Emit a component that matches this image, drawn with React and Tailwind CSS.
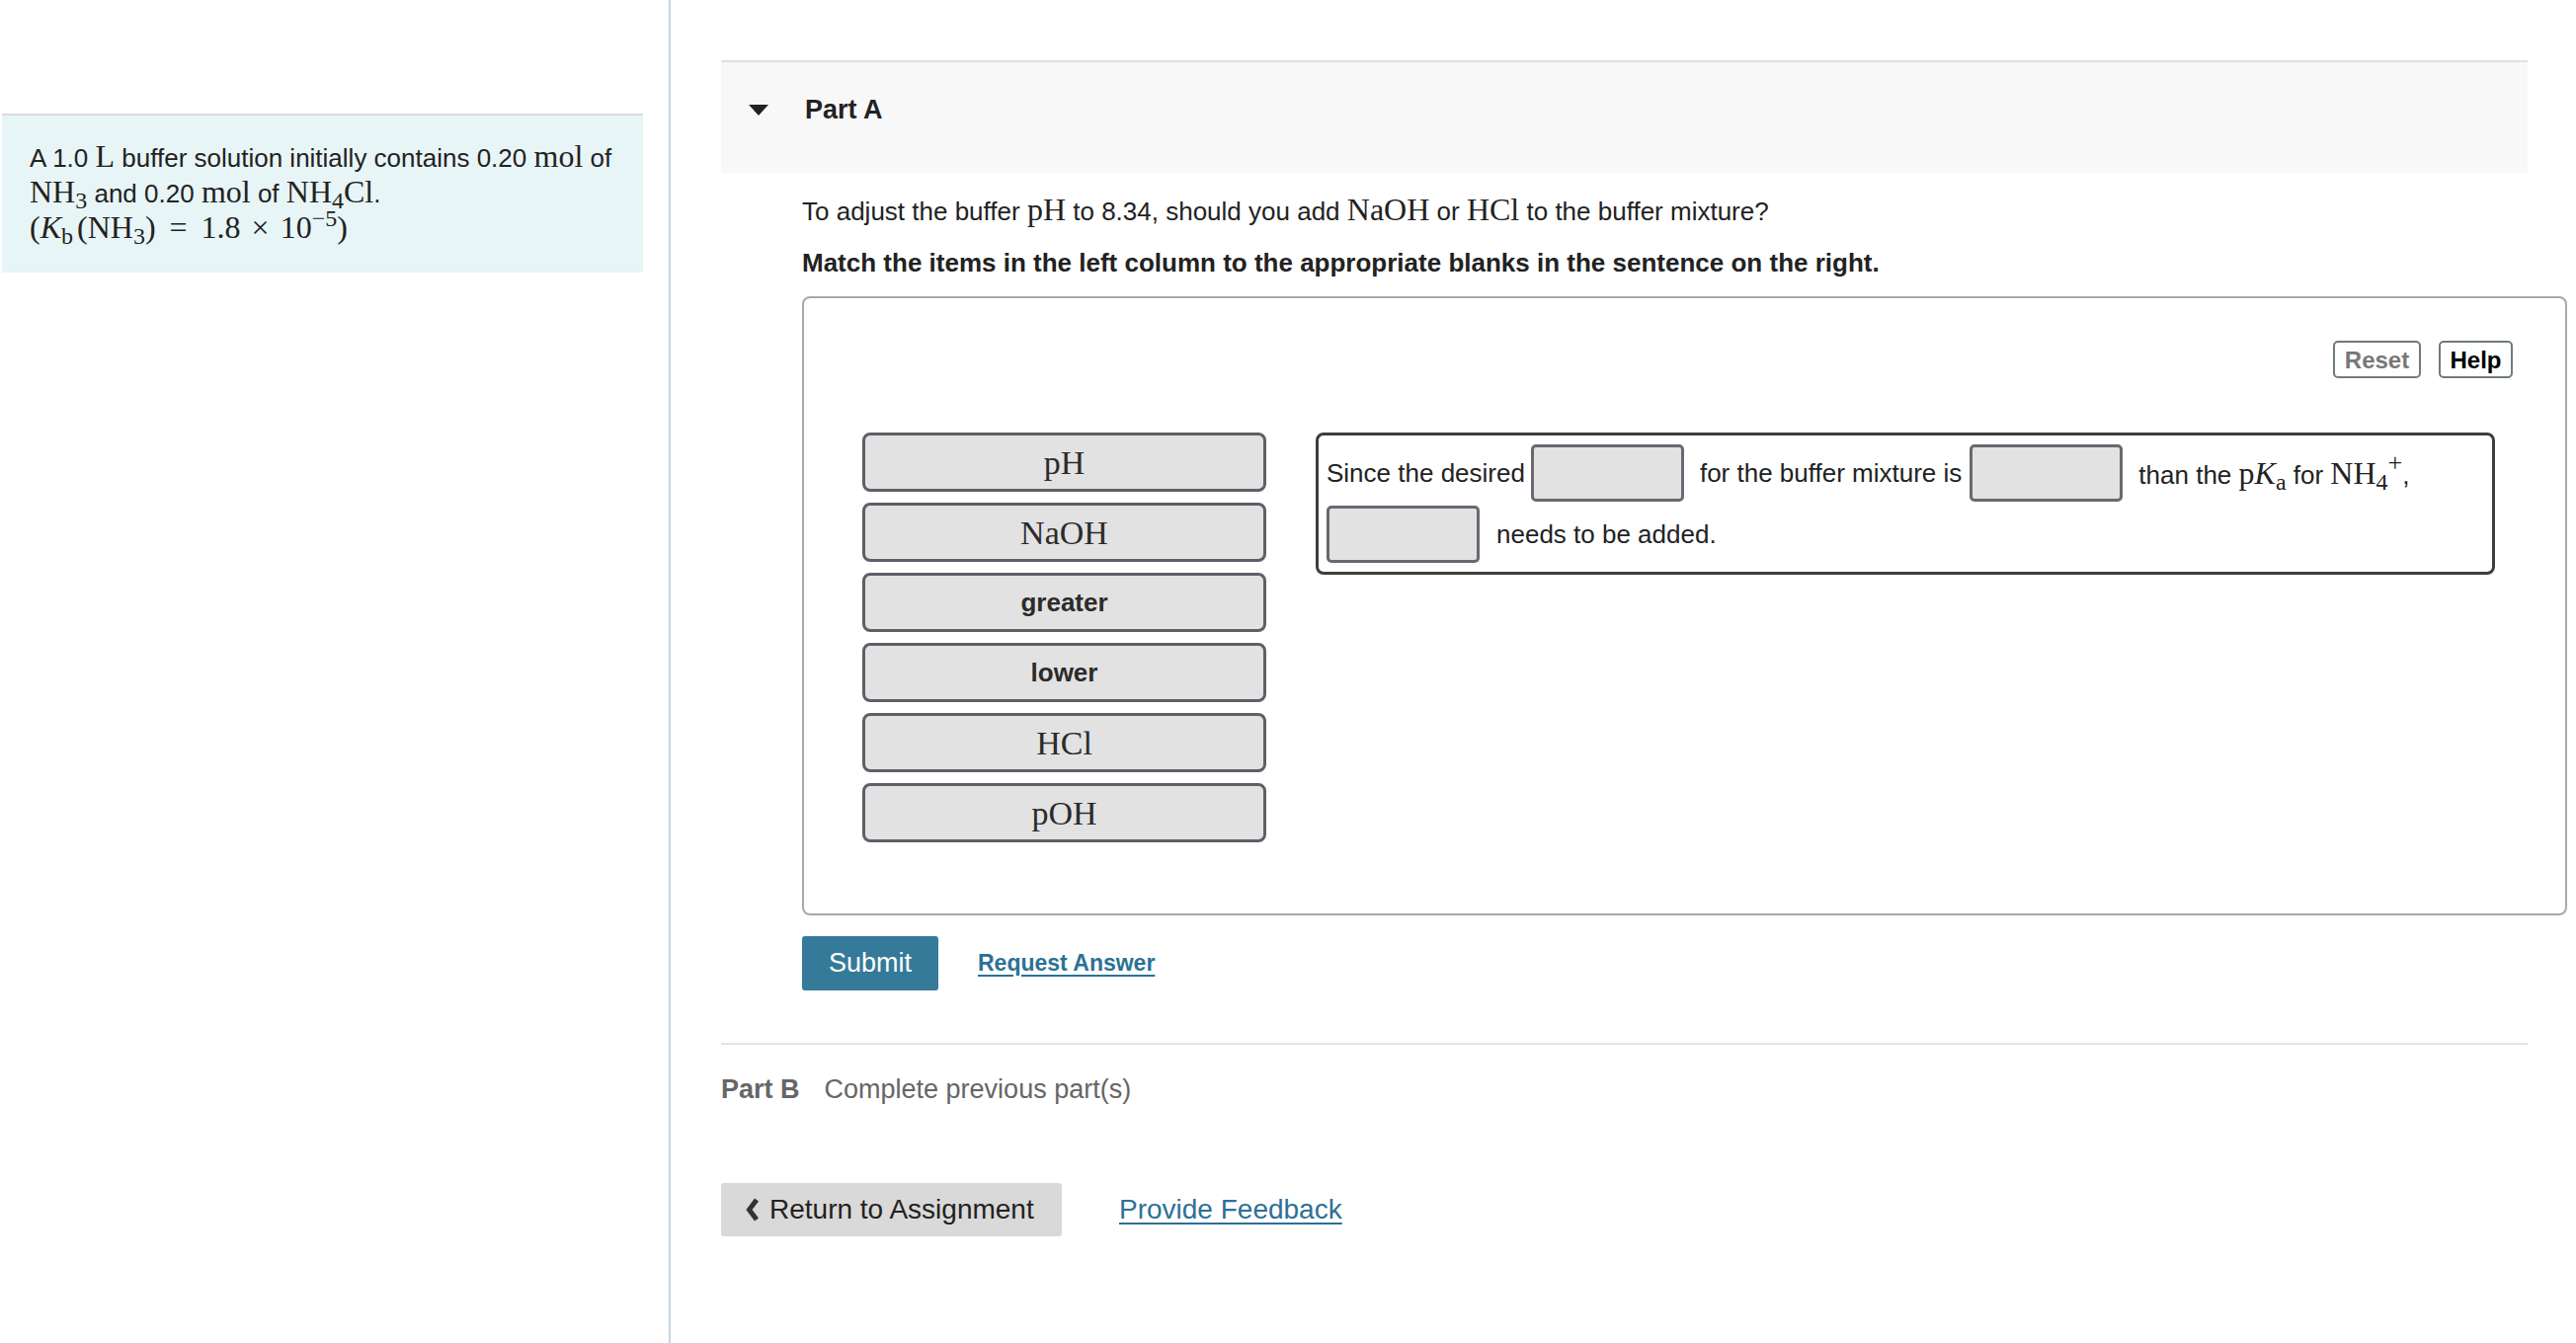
import React from 'react';

const serif = "font-['Liberation_Serif',serif]";

function M({ children, className = '' }) {
  return <span className={`${serif} text-[32px] ${className}`}>{children}</span>;
}

function Item({ label, math }) {
  return (
    <div className="h-[60px] w-[409px] rounded-[8px] border-[3px] border-[#5f5f68] bg-[#e2e2e2] flex items-center justify-center text-[#2b2b2b]">
      {math ? (
        <span className={`${serif} text-[34px]`}>{label}</span>
      ) : (
        <span className="text-[26px] font-bold">{label}</span>
      )}
    </div>
  );
}

function Blank({ className = '' }) {
  return (
    <div className={`h-[58px] w-[155px] shrink-0 rounded-[5px] border-[3px] border-[#696972] bg-[#e2e2e2] ${className}`} />
  );
}

export default function App() {
  const items = [
    { label: 'pH', math: true },
    { label: 'NaOH', math: true },
    { label: 'greater', math: false },
    { label: 'lower', math: false },
    { label: 'HCl', math: true },
    { label: 'pOH', math: true },
  ];

  return (
    <div className="min-h-[1360px] w-[2608px] flex bg-white text-[#222] font-['Liberation_Sans',Arial,sans-serif]">
      {/* left info panel */}
      <div className="w-[679px] shrink-0 border-r-2 border-[#cbd5e1] pt-[115px]">
        <div className="ml-[2px] w-[649px] border-t-2 border-[#dcdcdc] bg-[#e8f5f7] pl-[28px] pt-[24px] pb-[27px] text-[26px] leading-[34px] whitespace-nowrap">
          A 1.0 <M>L</M> buffer solution initially contains 0.20 <M>mol</M> of
          <br />
          <M>NH<sub>3</sub></M> and 0.20 <M>mol</M> of <M>NH<sub>4</sub>Cl</M>.
          <br />
          <M>
            (<i>K</i><sub className="mr-[4px]">b</sub>(NH<sub>3</sub>)<span className="mx-[14px]">=</span>1.8<span className="mx-[11px]">×</span>10<sup>−5</sup>)
          </M>
        </div>
      </div>

      {/* main column */}
      <div className="flex-1 min-w-0 pl-[51px] pr-[49px] pt-[61px]">
        <div className="h-[114px] border-t-2 border-[#e0e0e0] bg-[#f8f8f8] flex items-center pl-[28px] pb-[16px]">
          <svg width="20" height="11" viewBox="0 0 20 11" className="shrink-0">
            <polygon points="0,0 20,0 10,11" fill="#222" />
          </svg>
          <span className="ml-[37px] text-[27px] font-bold text-[#222]">Part A</span>
        </div>

        <div className="pl-[82px]">
          <p className="mt-[20px] text-[26px] leading-[34px]">
            To adjust the buffer <M>pH</M> to 8.34, should you add <M>NaOH</M> or <M>HCl</M> to the buffer mixture?
          </p>
          <p className="mt-[18px] text-[26px] leading-[34px] font-bold">
            Match the items in the left column to the appropriate blanks in the sentence on the right.
          </p>

          <div className="mt-[17px] w-[1787px] h-[627px] rounded-[8px] border-2 border-[#a9a9a9] pt-[43px]">
            <div className="flex justify-end gap-[18px] pr-[53px]">
              <button className="h-[38px] w-[89px] rounded-[5px] border-2 border-[#6f7a80] text-[24px] font-bold text-[#777]">
                Reset
              </button>
              <button className="h-[38px] w-[75px] rounded-[5px] border-2 border-[#6f7a80] text-[24px] font-bold text-black">
                Help
              </button>
            </div>

            <div className="mt-[55px] pl-[59px] flex items-start">
              <div className="flex flex-col gap-[11px]">
                {items.map((it) => (
                  <Item key={it.label} label={it.label} math={it.math} />
                ))}
              </div>

              <div className="ml-[50px] w-[1194px] rounded-[8px] border-[3px] border-[#3e3e3e] px-[8px] py-[9px] text-[26px]">
                <div className="flex flex-wrap items-center gap-y-[2px]">
                  <span className="whitespace-nowrap">Since the desired</span>
                  <Blank className="ml-[6px] mr-[16px]" />
                  <span className="whitespace-nowrap">for the buffer mixture is</span>
                  <Blank className="ml-[8px] mr-[16px]" />
                  <span className="whitespace-nowrap">
                    than the <M>p<i>K</i><sub>a</sub></M> for <M>NH<sub>4</sub><sup className="text-[26px]">+</sup></M>,
                  </span>
                  <div className="basis-full h-0" />
                  <Blank className="mr-[17px]" />
                  <span className="whitespace-nowrap">needs to be added.</span>
                </div>
              </div>
            </div>
          </div>

          <div className="mt-[21px] flex items-center">
            <button className="h-[55px] w-[138px] rounded-[3px] bg-[#357a99] text-[27px] text-white">
              Submit
            </button>
            <a href="#" className="ml-[40px] text-[23px] font-bold text-[#2b7195] underline underline-offset-[4px]">
              Request Answer
            </a>
          </div>
        </div>

        <div className="mt-[53px] border-t-2 border-[#e2e2e2]" />

        <div className="mt-[28px] flex items-center text-[27px] leading-[34px] text-[#666]">
          <span className="font-bold">Part B</span>
          <span className="ml-[25px]">Complete previous part(s)</span>
        </div>

        <div className="mt-[78px] flex items-center">
          <button className="h-[54px] w-[345px] rounded-[3px] bg-[#d9d9d9] flex items-center pl-[25px] text-[28px] text-[#222]">
            <svg width="14" height="24" viewBox="0 0 14 24" className="shrink-0">
              <polyline points="11,2 3.5,12 11,22" fill="none" stroke="#333" strokeWidth="5" strokeLinejoin="miter" />
            </svg>
            <span className="ml-[10px]">Return to Assignment</span>
          </button>
          <a href="#" className="ml-[58px] text-[28px] text-[#2e7096] underline underline-offset-[4px]">
            Provide Feedback
          </a>
        </div>
      </div>
    </div>
  );
}
